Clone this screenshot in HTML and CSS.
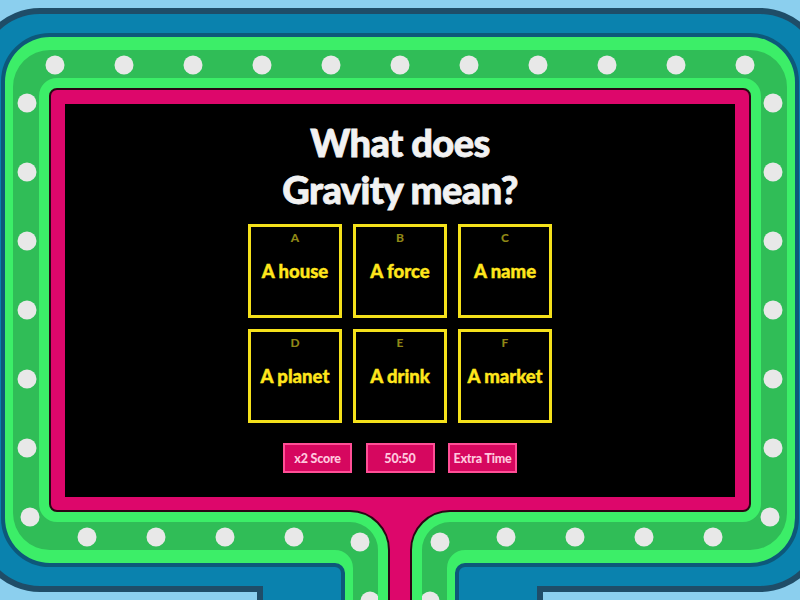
FILE: index.html
```html
<!DOCTYPE html>
<html lang="en">
<head>
<meta charset="utf-8">
<title>What does Gravity mean?</title>
<link rel="stylesheet" href="styles.css">
</head>
<body>
<div class="stage">
  <svg class="frame" width="800" height="600" viewBox="0 0 800 600" aria-hidden="true">
    <rect x="0" y="0" width="800" height="600" fill="#8bcfee"/>
    <!-- blue outer frame -->
    <path fill="#1f4d68" d="M40,8 H760 A65,65 0 0 1 825,73 V527 A65,65 0 0 1 760,592 H543 V600 H257 V592 H40 A65,65 0 0 1 -25,527 V73 A65,65 0 0 1 40,8 Z"/>
    <path fill="#0a82ae" d="M40,14 H760 A59,59 0 0 1 819,73 V527 A59,59 0 0 1 760,586 H537 V600 H263 V586 H40 A59,59 0 0 1 -19,527 V73 A59,59 0 0 1 40,14 Z"/>
    <!-- green band -->
    <path fill="#3cee68" stroke="#0d587a" stroke-width="8" paint-order="stroke" d="M50,37 H750 A45,45 0 0 1 795,82 V518 A45,45 0 0 1 750,563 H465 A10,10 0 0 0 455,573 V604 H345 V573 A10,10 0 0 0 335,563 H50 A45,45 0 0 1 5,518 V82 A45,45 0 0 1 50,37 Z"/>
    <path fill="#30bd57" d="M50,50 H750 A37,37 0 0 1 787,87 V513 A37,37 0 0 1 750,550 H465 A18,18 0 0 0 447,568 V604 H353 V568 A18,18 0 0 0 335,550 H50 A37,37 0 0 1 13,513 V87 A37,37 0 0 1 50,50 Z"/>
    <g fill="#e8e8e8">
      <circle cx="55" cy="65" r="9.5"/><circle cx="124" cy="65" r="9.5"/><circle cx="193" cy="65" r="9.5"/>
      <circle cx="262" cy="65" r="9.5"/><circle cx="331" cy="65" r="9.5"/><circle cx="400" cy="65" r="9.5"/>
      <circle cx="469" cy="65" r="9.5"/><circle cx="538" cy="65" r="9.5"/><circle cx="607" cy="65" r="9.5"/>
      <circle cx="676" cy="65" r="9.5"/><circle cx="745" cy="65" r="9.5"/>
      <circle cx="27" cy="103" r="9.5"/><circle cx="27" cy="172" r="9.5"/><circle cx="27" cy="241" r="9.5"/>
      <circle cx="27" cy="310" r="9.5"/><circle cx="27" cy="379" r="9.5"/><circle cx="27" cy="448" r="9.5"/>
      <circle cx="30" cy="517" r="9.5"/>
      <circle cx="773" cy="103" r="9.5"/><circle cx="773" cy="172" r="9.5"/><circle cx="773" cy="241" r="9.5"/>
      <circle cx="773" cy="310" r="9.5"/><circle cx="773" cy="379" r="9.5"/><circle cx="773" cy="448" r="9.5"/>
      <circle cx="770" cy="517" r="9.5"/>
      <circle cx="87" cy="537" r="9.5"/><circle cx="156" cy="537" r="9.5"/><circle cx="225" cy="537" r="9.5"/>
      <circle cx="294" cy="537" r="9.5"/><circle cx="360" cy="542" r="9.5"/><circle cx="370" cy="601" r="9.5"/>
      <circle cx="713" cy="537" r="9.5"/><circle cx="644" cy="537" r="9.5"/><circle cx="575" cy="537" r="9.5"/>
      <circle cx="506" cy="537" r="9.5"/><circle cx="440" cy="542" r="9.5"/><circle cx="430" cy="601" r="9.5"/>
    </g>
    <path fill="#3cee68" d="M57,78 H743 A18,18 0 0 1 761,96 V504 A18,18 0 0 1 743,522 H450 A28,28 0 0 0 422,550 V604 H378 V550 A28,28 0 0 0 350,522 H57 A18,18 0 0 1 39,504 V96 A18,18 0 0 1 57,78 Z"/>
    <!-- pink screen border and stand -->
    <path fill="#dd076b" stroke="#2a0614" stroke-width="4" paint-order="stroke" d="M57,90 H743 A6,6 0 0 1 749,96 V504 A6,6 0 0 1 743,510 H450 A40,40 0 0 0 410,550 V604 H390 V550 A40,40 0 0 0 350,510 H57 A6,6 0 0 1 51,504 V96 A6,6 0 0 1 57,90 Z"/>
    <rect x="65" y="104" width="670" height="393" fill="#000"/>
  </svg>

  <main class="screen">
    <h1 class="question">What does<br>Gravity mean?</h1>
    <div class="answers">
      <div class="answer"><span class="letter">A</span><span class="text">A house</span></div>
      <div class="answer"><span class="letter">B</span><span class="text">A force</span></div>
      <div class="answer"><span class="letter">C</span><span class="text">A name</span></div>
      <div class="answer"><span class="letter">D</span><span class="text">A planet</span></div>
      <div class="answer"><span class="letter">E</span><span class="text">A drink</span></div>
      <div class="answer"><span class="letter">F</span><span class="text">A market</span></div>
    </div>
    <div class="powerups">
      <button class="powerup">x2 Score</button>
      <button class="powerup">50:50</button>
      <button class="powerup">Extra Time</button>
    </div>
  </main>
</div>
</body>
</html>
```
FILE: styles.css
```css
html, body {
  margin: 0;
  padding: 0;
  background: #8bcfee;
}

body {
  width: 800px;
  height: 600px;
  overflow: hidden;
  font-family: Lato, "Liberation Sans", sans-serif;
  font-weight: 900;
}

.stage {
  display: grid;
  width: 800px;
  height: 600px;
  overflow: hidden;
}

.stage > * {
  grid-area: 1 / 1;
}

.frame {
  display: block;
}

.screen {
  margin: 104px 0 0 65px;
  width: 670px;
  height: 393px;
  box-sizing: border-box;
  padding-top: 15px;
  display: flex;
  flex-direction: column;
  align-items: center;
}

.question {
  margin: 0;
  color: #f2f2f2;
  font-size: 38px;
  line-height: 47px;
  font-weight: 900;
  letter-spacing: -0.6px;
  -webkit-text-stroke: 0.8px #f2f2f2;
  text-align: center;
}

.answers {
  margin-top: 11px;
  display: grid;
  grid-template-columns: repeat(3, 94px);
  grid-auto-rows: 94px;
  gap: 11px;
}

.answer {
  display: grid;
  box-sizing: border-box;
  border: 3px solid #f5e11b;
  justify-items: center;
}

.answer > * {
  grid-area: 1 / 1;
}

.letter {
  align-self: start;
  margin-top: 4px;
  font-size: 12px;
  line-height: 14px;
  color: #8f8716;
}

.text {
  align-self: center;
  margin-top: -1px;
  font-size: 18.5px;
  line-height: 24px;
  -webkit-text-stroke: 0.4px #ffe61c;
  color: #ffe61c;
  white-space: nowrap;
}

.powerups {
  margin-top: 20px;
  display: flex;
  gap: 13.5px;
}

.powerup {
  width: 69px;
  height: 30px;
  box-sizing: border-box;
  padding: 0;
  border: 2px solid #ff4f96;
  background: #d6075f;
  color: #ffc8de;
  font-family: inherit;
  font-weight: 900;
  font-size: 12.5px;
  letter-spacing: -0.2px;
  white-space: nowrap;
  display: flex;
  align-items: center;
  justify-content: center;
}
```
